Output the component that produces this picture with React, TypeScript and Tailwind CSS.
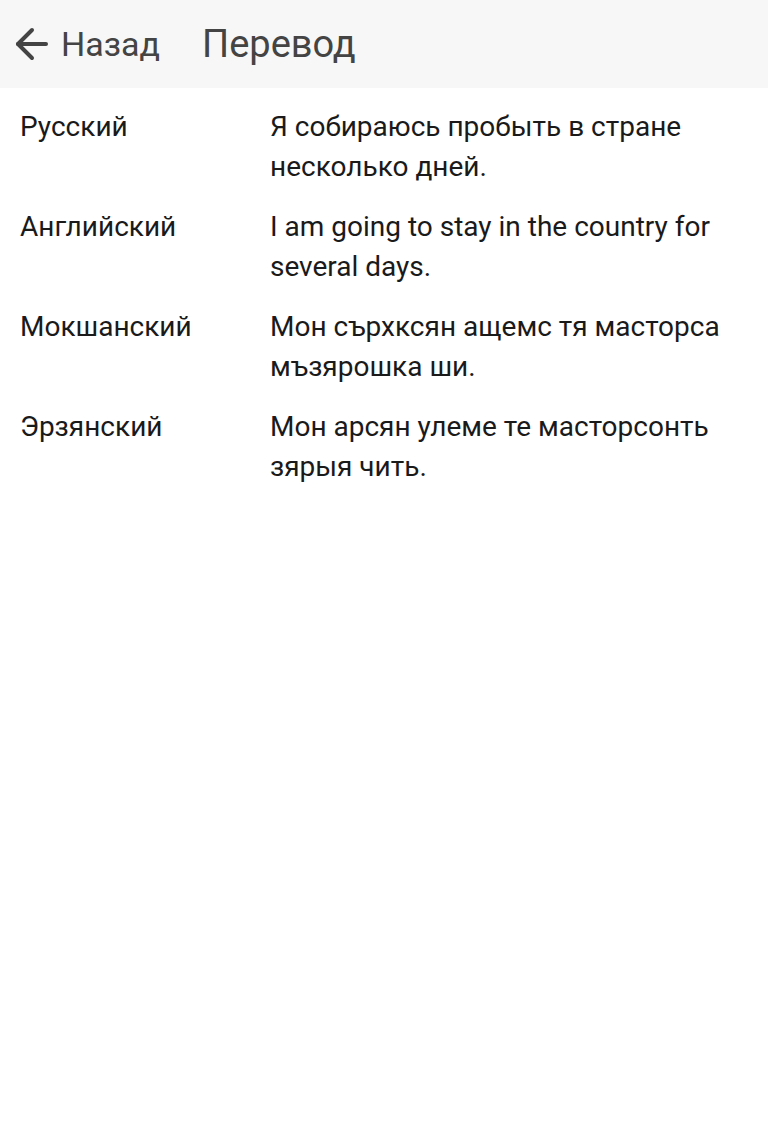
import { ArrowLeft } from "lucide-react";

const rows = [
  { lang: "Русский", text: "Я собираюсь пробыть в стране несколько дней." },
  { lang: "Английский", text: "I am going to stay in the country for several days." },
  { lang: "Мокшанский", text: "Мон сърхксян ащемс тя масторса мъзярошка ши." },
  { lang: "Эрзянский", text: "Мон арсян улеме те масторсонть зярыя чить." },
];

const App = () => {
  return (
    <div className="min-h-[1133px] bg-white font-['Roboto',sans-serif]">
      <header className="flex h-[88px] items-center bg-[#f7f7f7] pl-2">
        <button className="flex items-center text-[#444444]">
          <ArrowLeft size={48} strokeWidth={2} />
          <span className="ml-[5px] text-[34px] leading-none">Назад</span>
        </button>
        <h1 className="ml-[42px] text-[38px] leading-none text-[#444444]">Перевод</h1>
      </header>
      <div className="flex flex-col gap-5 px-5 pt-[19px]">
        {rows.map((r) => (
          <div key={r.lang} className="grid grid-cols-[250px_1fr] text-[28px] leading-[40px] text-[#1a1a1a]">
            <div>{r.lang}</div>
            <div>{r.text}</div>
          </div>
        ))}
      </div>
    </div>
  );
};

export default App;
